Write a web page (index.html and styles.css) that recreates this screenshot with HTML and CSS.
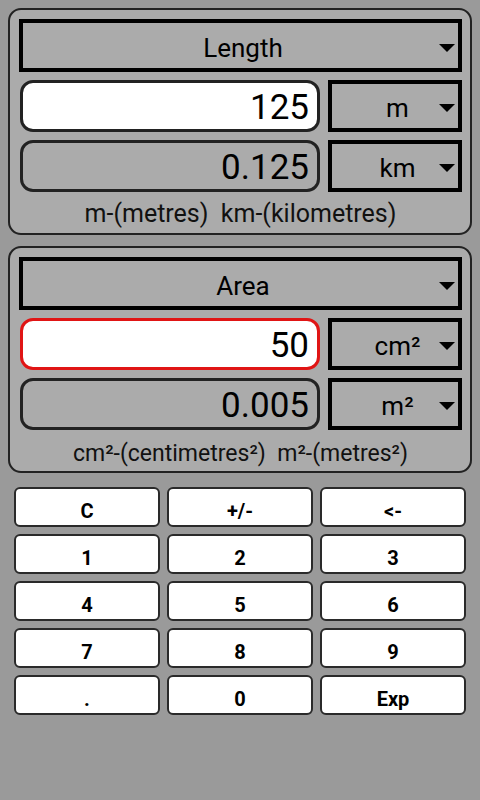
FILE: index.html
```html
<!DOCTYPE html>
<html>
<head>
<meta charset="utf-8">
<link rel="stylesheet" href="styles.css">
</head>
<body>
<div class="page">
  <section class="panel">
    <div class="select select-main"><span class="sel-text">Length</span><svg class="arrow" viewBox="0 0 16 8"><polygon points="0,0 16,0 8,8"/></svg></div>
    <div class="row">
      <div class="field field-white">125</div>
      <div class="select"><span class="sel-text">m</span><svg class="arrow" viewBox="0 0 16 8"><polygon points="0,0 16,0 8,8"/></svg></div>
    </div>
    <div class="row">
      <div class="field">0.125</div>
      <div class="select"><span class="sel-text">km</span><svg class="arrow" viewBox="0 0 16 8"><polygon points="0,0 16,0 8,8"/></svg></div>
    </div>
    <div class="legend">m-(metres)  km-(kilometres)</div>
  </section>
  <section class="panel">
    <div class="select select-main"><span class="sel-text">Area</span><svg class="arrow" viewBox="0 0 16 8"><polygon points="0,0 16,0 8,8"/></svg></div>
    <div class="row">
      <div class="field field-white field-active">50</div>
      <div class="select"><span class="sel-text">cm²</span><svg class="arrow" viewBox="0 0 16 8"><polygon points="0,0 16,0 8,8"/></svg></div>
    </div>
    <div class="row">
      <div class="field">0.005</div>
      <div class="select"><span class="sel-text">m²</span><svg class="arrow" viewBox="0 0 16 8"><polygon points="0,0 16,0 8,8"/></svg></div>
    </div>
    <div class="legend legend-small">cm²-(centimetres²)  m²-(metres²)</div>
  </section>
  <div class="keypad">
    <div class="key">C</div>
    <div class="key">+/-</div>
    <div class="key">&lt;-</div>
    <div class="key">1</div>
    <div class="key">2</div>
    <div class="key">3</div>
    <div class="key">4</div>
    <div class="key">5</div>
    <div class="key">6</div>
    <div class="key">7</div>
    <div class="key">8</div>
    <div class="key">9</div>
    <div class="key">.</div>
    <div class="key">0</div>
    <div class="key">Exp</div>
  </div>
</div>
</body>
</html>
```

FILE: styles.css
```css
* { box-sizing: border-box; }
html, body {
  margin: 0;
  padding: 0;
  background: #9a9a9a;
  font-family: Roboto, "Noto Sans", sans-serif;
  color: #000;
}
.page {
  width: 480px;
  height: 800px;
  padding: 8px;
  display: flex;
  flex-direction: column;
}
.panel {
  background: #ababab;
  border: 2px solid #222;
  border-radius: 13px;
  padding: 9px 8px 0 9px;
  display: flex;
  flex-direction: column;
  gap: 8px;
}
.panel + .panel { margin-top: 11px; }
.select {
  height: 52px;
  border: 4px solid #000;
  background: #ababab;
  display: flex;
  align-items: center;
  padding: 4px 3px 0 24px;
}
.select-main { height: 53px; }
.sel-text {
  flex: 1;
  text-align: center;
  font-size: 26px;
  line-height: 30px;
}
.arrow {
  width: 16px;
  height: 8px;
  fill: #000;
  margin-top: 0;
}
.row {
  display: grid;
  grid-template-columns: 1fr 134px;
  gap: 8px;
}
.field {
  height: 52px;
  margin-left: 1px;
  border: 3px solid #222;
  border-radius: 13px;
  background: #ababab;
  text-align: right;
  font-size: 35px;
  line-height: 50px;
  padding-right: 8px;
}
.field-white { background: #fff; }
.field-active { border-color: #e01515; }
.legend {
  text-align: center;
  font-size: 25px;
  line-height: 28px;
  padding: 0 0 5px;
  white-space: pre;
  color: #111;
}
.legend-small {
  font-size: 23px;
  padding-top: 2px;
  padding-bottom: 3px;
}
.keypad {
  margin: 14px 6px 0;
  display: grid;
  grid-template-columns: repeat(3, 1fr);
  grid-auto-rows: 40px;
  gap: 7px;
}
.key {
  background: #fff;
  border: 2px solid #2a2a2a;
  border-radius: 6px;
  display: flex;
  align-items: center;
  justify-content: center;
  font-weight: bold;
  font-size: 20px;
  padding-top: 7px;
  color: #000;
}
```
